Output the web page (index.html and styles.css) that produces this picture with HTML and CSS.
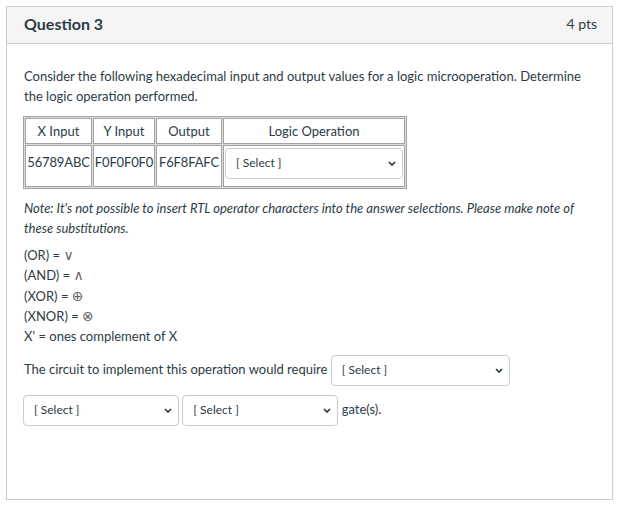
FILE: index.html
```html
<!DOCTYPE html>
<html lang="en">
<head>
<meta charset="utf-8">
<title>Question 3</title>
<link rel="stylesheet" href="styles.css">
</head>
<body>
<div class="question">
  <div class="q-header">
    <span class="q-title">Question 3</span>
    <span class="q-points">4 pts</span>
  </div>
  <div class="q-body">
    <p class="intro">Consider the following hexadecimal input and output values for a logic microoperation. Determine the logic operation performed.</p>
    <table class="values">
      <tr>
        <th class="c1">X Input</th>
        <th class="c2">Y Input</th>
        <th class="c3">Output</th>
        <th class="c4">Logic Operation</th>
      </tr>
      <tr>
        <td class="c1">56789ABC</td>
        <td class="c2">F0F0F0F0</td>
        <td class="c3">F6F8FAFC</td>
        <td class="c4"><span class="dd dd-op"><select class="drop"><option>[ Select ]</option></select><svg class="chev" width="8" height="5" viewBox="0 0 8 5"><path d="M1 1 L4 4 L7 1" fill="none" stroke="#2d3b45" stroke-width="1.7"/></svg></span></td>
      </tr>
    </table>
    <p class="note">Note: It's not possible to insert RTL operator characters into the answer selections. Please make note of these substitutions.</p>
    <p class="legend">(OR) = <span class="sym">∨</span><br>(AND) = <span class="sym">∧</span><br>(XOR) = <span class="sym">⊕</span><br>(XNOR) = <span class="sym">⊗</span><br>X' = ones complement of X</p>
    <p class="circuit">The circuit to implement this operation would require <span class="dd dd-wide"><select class="drop"><option>[ Select ]</option></select><svg class="chev" width="8" height="5" viewBox="0 0 8 5"><path d="M1 1 L4 4 L7 1" fill="none" stroke="#2d3b45" stroke-width="1.7"/></svg></span> <span class="dd dd-narrow dd-first"><select class="drop"><option>[ Select ]</option></select><svg class="chev" width="8" height="5" viewBox="0 0 8 5"><path d="M1 1 L4 4 L7 1" fill="none" stroke="#2d3b45" stroke-width="1.7"/></svg></span> <span class="dd dd-narrow"><select class="drop"><option>[ Select ]</option></select><svg class="chev" width="8" height="5" viewBox="0 0 8 5"><path d="M1 1 L4 4 L7 1" fill="none" stroke="#2d3b45" stroke-width="1.7"/></svg></span> gate(s).</p>
  </div>
</div>
</body>
</html>
```

FILE: styles.css
```css
html, body {
  margin: 0;
  background: #ffffff;
}
body {
  padding: 6px 0 0 6px;
  font-family: Lato, "Liberation Sans", sans-serif;
  color: #2d3b45;
}
.question {
  box-sizing: border-box;
  width: 607px;
  height: 494px;
  border: 1px solid #c7cdd1;
  box-shadow: 0 1px 1px rgba(0,0,0,0.08);
}
.q-header {
  box-sizing: border-box;
  height: 37px;
  background: #f5f5f5;
  border-bottom: 1px solid #c7cdd1;
  display: flex;
  align-items: center;
  justify-content: space-between;
  padding: 0 15px 3px 17px;
}
.q-title {
  font-size: 16px;
  font-weight: 700;
}
.q-points {
  font-size: 14px;
}
.q-body {
  padding: 23px 17px 0 17px;
  font-size: 13px;
  line-height: 19.5px;
}
.q-body p {
  margin: 0;
}
.intro {
  margin-bottom: 10px !important;
}
.values {
  border-collapse: separate;
  border-spacing: 1px;
  border: 1px solid #a3a3a3;
  background: #dcdcdc;
  margin: 0 0 0 -1px;
  table-layout: fixed;
  width: 384px;
}
.values th, .values td {
  background: #ffffff;
  border: 1px solid #a3a3a3;
  padding: 0;
  font-weight: 400;
  font-size: 13px;
  text-align: center;
  white-space: nowrap;
}
.values th {
  height: 24px;
  line-height: 24px;
  vertical-align: middle;
}
.values td {
  padding-top: 1px;
  height: 39px;
  line-height: 31px;
  vertical-align: top;
  letter-spacing: -0.15px;
}
.c1 { width: 65px; }
.c2 { width: 60px; }
.c3 { width: 64px; }
.c4 { width: 180px; }
.note {
  font-style: italic;
  margin-top: 10px !important;
  margin-bottom: 7px !important;
}
.legend {
  line-height: 20.25px;
}
.sym {
  font-family: "DejaVu Sans", sans-serif;
  font-size: 14px;
  line-height: 1;
  color: #666;
}
.circuit {
  margin-top: 8px !important;
  line-height: 31px;
}
.dd {
  position: relative;
  display: inline-block;
  vertical-align: baseline;
  margin-bottom: 8px;
  letter-spacing: 0;
}
.dd-op { width: 178px; margin: 0; }
.dd-wide { width: 179px; }
.dd-narrow { width: 156px; }
.dd-first { margin-left: -1px; }
.drop {
  -webkit-appearance: none;
  appearance: none;
  display: block;
  box-sizing: border-box;
  width: 100%;
  height: 31px;
  font-family: Lato, "Liberation Sans", sans-serif;
  font-size: 12px;
  color: #2d3b45;
  background: #ffffff;
  border: 1px solid #c7cdd1;
  border-radius: 4px;
  padding: 0 20px 2px 10px;
  margin: 0;
  text-align: left;
}
.chev {
  position: absolute;
  right: 7px;
  top: 13px;
  pointer-events: none;
}
```
